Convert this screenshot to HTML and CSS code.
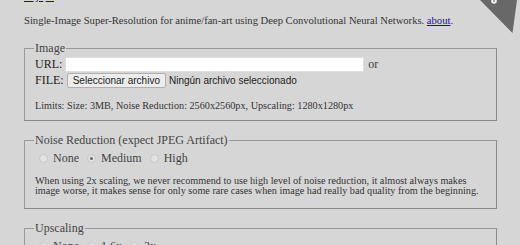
FILE: index.html
```html
<!DOCTYPE html>
<html lang="en">
<head>
  <meta charset="UTF-8" />
  <title>waifu2x</title>
  <link rel="stylesheet" href="styles.css">
</head>
<body>
  <a class="github-banner" href="#" aria-label="GitHub">
    <svg width="44" height="40" viewBox="0 0 44 40">
      <polygon points="4,0 41,0 36.5,33" fill="#686868"/>
      <circle cx="18" cy="1" r="2.8" fill="#f2f2f2"/>
      <circle cx="18" cy="1" r="1" fill="#8a8a8a"/>
    </svg>
  </a>
  <div class="main-content">
    <div class="lang-links">
      <a href="#">en</a> <a href="#">ja</a> <a href="#">ru</a>
    </div>
    <p class="intro">Single-Image Super-Resolution for anime/fan-art using Deep Convolutional Neural Networks. <a href="#">about</a>.</p>

    <fieldset class="box">
      <legend>Image</legend>
      <div class="row">
        <label>URL:</label>
        <input class="url-input" type="text">
        <span class="or">or</span>
      </div>
      <div class="row">
        <label>FILE:</label>
        <button class="file-button">Seleccionar archivo</button>
        <span class="file-name">Ningún archivo seleccionado</span>
      </div>
      <div class="help">Limits: Size: 3MB, Noise Reduction: 2560x2560px, Upscaling: 1280x1280px</div>
    </fieldset>

    <fieldset class="box">
      <legend>Noise Reduction (expect JPEG Artifact)</legend>
      <div class="radios">
        <label><input type="radio" name="noise"> None</label>
        <label><input type="radio" name="noise" checked> Medium</label>
        <label><input type="radio" name="noise"> High</label>
      </div>
      <div class="help">When using 2x scaling, we never recommend to use high level of noise reduction, it almost always makes image worse, it makes sense for only some rare cases when image had really bad quality from the beginning.</div>
    </fieldset>

    <fieldset class="box">
      <legend>Upscaling</legend>
      <div class="radios">
        <label><input type="radio" name="scale" checked> None</label>
        <label><input type="radio" name="scale"> 1.6x</label>
        <label><input type="radio" name="scale"> 2x</label>
      </div>
    </fieldset>
  </div>
</body>
</html>
```

FILE: styles.css
```css
html, body {
  margin: 0;
  padding: 0;
  background: #d6d6d6;
  overflow: hidden;
}

body, p, label, legend, span, div {
  font-family: "Liberation Serif", "DejaVu Serif", serif;
}

body {
  font-size: 10.6px;
  color: #333;
}

.main-content {
  width: 473px;
  margin: -10px 0 0 24px;
}

a {
  color: #1a0dab;
}

.lang-links {
  font-size: 10px;
  line-height: 14px;
}

.intro {
  margin: 10px 0 0 0;
  line-height: 14px;
}

.box {
  margin: 12px 0 0 0;
  padding: 0 10px 9px 10px;
  border: 1px solid #8a8a8a;
  border-left-color: #999;
  border-top-color: #999;
}

.intro + .box {
  margin-top: 13px;
}

.box legend {
  padding: 0 1px;
  margin-left: -1px;
  font-size: 12px;
  color: #444;
}

.row {
  display: flex;
  align-items: center;
  gap: 3px;
  height: 16px;
  font-size: 12px;
}

.row label {
  color: #222;
}

.url-input {
  width: 299px;
  height: 15px;
  box-sizing: border-box;
  border: 1px solid #ddd;
  background: #fff;
  padding: 0;
  margin: 0;
}

.or {
  margin-left: 1px;
  color: #444;
}

.row .file-button, .row .file-name {
  font-family: "Liberation Sans", Arial, sans-serif;
  font-size: 10px;
  color: #222;
}

.file-button {
  height: 15px;
  padding: 0 5px;
  border: 1px solid #b0b0b0;
  border-radius: 2px;
  background: #ececec;
  margin: 1px 0 0 0;
  line-height: 13px;
}

.help {
  margin-top: 13px;
  font-size: 10.2px;
  line-height: 10px;
  color: #333;
}

.radios {
  display: flex;
  gap: 8px;
  font-size: 12px;
  color: #444;
  margin-top: 3px;
  padding-left: 4px;
}

.radios + .help {
  margin: 10px 0 3px 0;
}

.radios label {
  display: flex;
  align-items: center;
  gap: 5px;
}

.radios input {
  appearance: none;
  -webkit-appearance: none;
  width: 9px;
  height: 9px;
  margin: 0;
  border: 1px solid #c6c6c6;
  border-radius: 50%;
  background: #e2e2e2;
  position: relative;
}

.radios input:checked::after {
  content: "";
  position: absolute;
  left: 2px;
  top: 2px;
  width: 3px;
  height: 3px;
  border-radius: 50%;
  background: #666;
}

.github-banner {
  position: absolute;
  top: 0;
  right: 0;
  line-height: 0;
}
```
